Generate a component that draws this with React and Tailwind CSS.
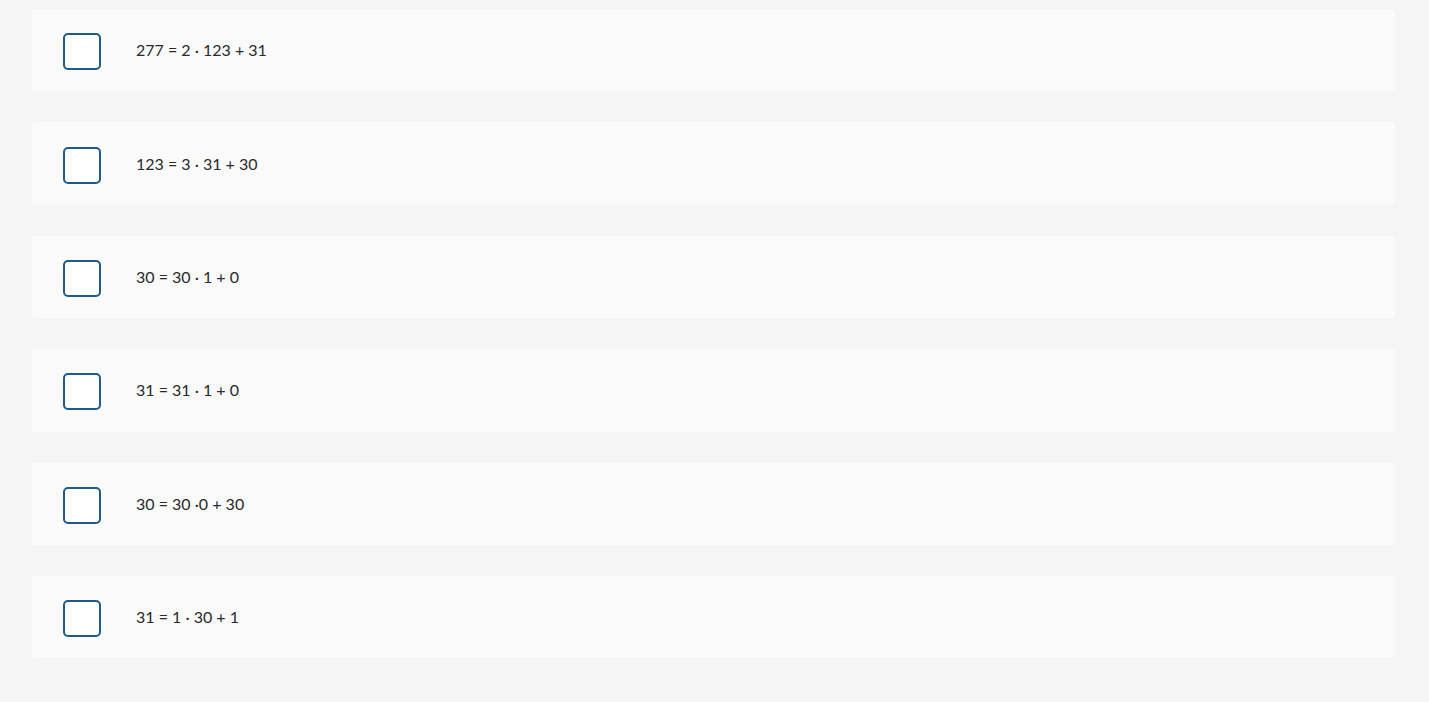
import React from 'react';

const rows = [
    '277 = 2 · 123 + 31',
    '123 = 3 · 31 + 30',
    '30 = 30 · 1 + 0',
    '31 = 31 · 1 + 0',
    '30 = 30 ·0 + 30',
    '31 = 1 · 30 + 1',
];

const App = () => {
    return (
        <div className="min-h-[702px] w-full bg-[#f5f5f5] pt-[9px] pb-[43px] pl-[32px] pr-[34px] font-['Lato',sans-serif]">
            <div className="flex flex-col gap-[31px]">
                {rows.map((text, i) => (
                    <div key={i} className="h-[82.4px] bg-[#fafafa] rounded-[4px] flex items-center pl-[31px]">
                        <div className="w-[38px] h-[37px] mt-[3px] shrink-0 bg-white border-2 border-[#1f5a8c] rounded-[5px]"></div>
                        <div className="ml-[35px] text-[16px] text-[#2a2a2a]">{text}</div>
                    </div>
                ))}
            </div>
        </div>
    );
};

export default App;
